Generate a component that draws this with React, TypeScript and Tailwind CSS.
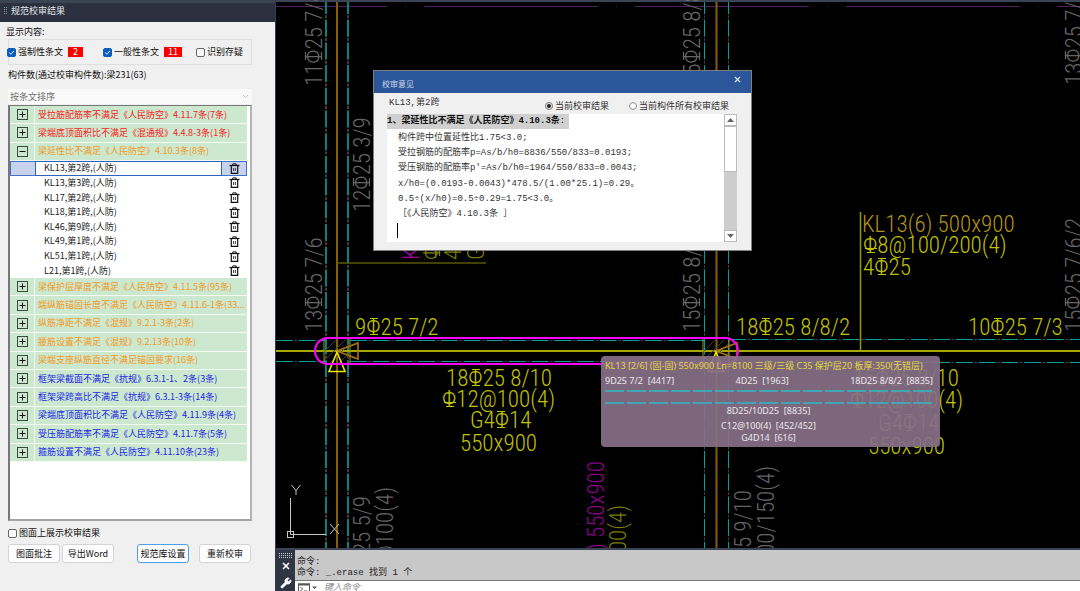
import React from 'react';
import { ChevronDown, Wrench, X } from 'lucide-react';

type Rule = { text: string; open?: boolean };

const strictRules: Rule[] = [
    { text: '受拉筋配筋率不满足《人民防空》4.11.7条(7条)' },
    { text: '梁端底顶面积比不满足《混通规》4.4.8-3条(1条)' },
];

const openRule: Rule = { text: '梁延性比不满足《人民防空》4.10.3条(8条)', open: true };

const members = [
    'KL13,第2跨,(人防)',
    'KL13,第3跨,(人防)',
    'KL17,第2跨,(人防)',
    'KL18,第1跨,(人防)',
    'KL46,第9跨,(人防)',
    'KL49,第1跨,(人防)',
    'KL51,第1跨,(人防)',
    'L21,第1跨,(人防)',
];

const generalRules: Rule[] = [
    { text: '梁保护层厚度不满足《人民防空》4.11.5条(95条)' },
    { text: '端纵筋锚固长度不满足《人民防空》4.11.6-1条(33...' },
    { text: '纵筋净距不满足《混规》9.2.1-3条(2条)' },
    { text: '腰筋设置不满足《混规》9.2.13条(10条)' },
    { text: '梁端支座纵筋直径不满足锚固要求(16条)' },
];

const otherRules: Rule[] = [
    { text: '框架梁截面不满足《抗规》6.3.1-1、2条(3条)' },
    { text: '框架梁跨高比不满足《抗规》6.3.1-3条(14条)' },
    { text: '梁端底顶面积比不满足《人民防空》4.11.9条(4条)' },
    { text: '受压筋配筋率不满足《人民防空》4.11.7条(5条)' },
    { text: '箍筋设置不满足《人民防空》4.11.10条(23条)' },
];

const opinionLines = [
    '构件跨中位置延性比1.75<3.0;',
    '受拉钢筋的配筋率p=As/b/h0=8836/550/833=0.0193;',
    "受压钢筋的配筋率p'=As/b/h0=1964/550/833=0.0043;",
    'x/h0=(0.0193-0.0043)*478.5/(1.00*25.1)=0.29。',
    '0.5÷(x/h0)=0.5÷0.29=1.75<3.0。',
    '［《人民防空》4.10.3条 ］',
];

const CheckBox = ({ label, checked }: { label: string; checked?: boolean }) => (
    <label className="flex items-center gap-0.5 whitespace-nowrap">
        <span className="relative block h-[9px] w-[9px]">
            <input
                type="checkbox"
                defaultChecked={checked}
                className="peer block h-[9px] w-[9px] appearance-none rounded-[2px] border border-[#666] bg-[#fafafa] checked:border-[#0a5fbe] checked:bg-[#0a5fbe]"
            />
            <svg viewBox="0 0 9 9" className="pointer-events-none absolute inset-0 hidden h-[9px] w-[9px] peer-checked:block">
                <path d="M2.2 4.6 L3.9 6.2 L6.9 3" fill="none" stroke="#fff" strokeWidth="1" />
            </svg>
        </span>
        {label}
    </label>
);

const ToggleIcon = ({ open }: { open?: boolean }) => (
    <svg viewBox="0 0 11 11" className="h-[11px] w-[11px]">
        <rect x="0.5" y="0.5" width="10" height="10" fill="none" stroke="#3c4a3e" />
        <path d={open ? 'M2.5 5.5H8.5' : 'M2.5 5.5H8.5M5.5 2.5V8.5'} stroke="#111" />
    </svg>
);

const TrashIcon = () => (
    <svg viewBox="0 0 11 11" className="h-[11px] w-[11px]" fill="none" stroke="#111">
        <path d="M0.5 2.5H10.5" strokeWidth="1.2" />
        <path d="M3.8 2.2V0.9H7.2V2.2" />
        <path d="M2.3 3V10.3H8.7V3" strokeWidth="1.2" />
        <path d="M4.6 5V8M6.4 5V8" strokeWidth="0.8" />
    </svg>
);

const RuleRow = ({ rule, color }: { rule: Rule; color: string }) => (
    <li className="flex border-b border-[#f2faf3] bg-[#cce8cf]">
        <button
            type="button"
            aria-label={rule.open ? '收起' : '展开'}
            className="flex w-[25px] items-center justify-center border-r border-[#f2faf3]"
        >
            <ToggleIcon open={rule.open} />
        </button>
        <span className={`flex min-w-0 flex-1 items-center overflow-hidden whitespace-nowrap pl-[3px] ${color}`}>{rule.text}</span>
    </li>
);

const MemberRow = ({ name, selected }: { name: string; selected?: boolean }) => (
    <li className={`flex ${selected ? 'bg-[#c7d3ee] ring-1 ring-inset ring-[#4472c4]' : 'bg-white'}`}>
        <span className="w-[25px]" />
        <span
            className={`flex flex-1 items-center whitespace-nowrap pl-2 text-[#222] ${selected ? 'border border-[#2f62bd] bg-white' : 'border border-transparent'}`}
        >
            {name}
        </span>
        <button type="button" aria-label="删除" className="flex w-[25px] items-center justify-center">
            <TrashIcon />
        </button>
    </li>
);

const PanelButton = ({ children, active }: { children: React.ReactNode; active?: boolean }) => (
    <button
        type="button"
        className={`h-[19px] w-[52px] whitespace-nowrap rounded-[3px] border bg-[#fdfdfd] ${active ? 'border-[#4a9fe6]' : 'border-[#d4d4d4]'}`}
    >
        {children}
    </button>
);

const ReviewPanel = () => (
    <aside className="flex w-[276px] shrink-0 flex-col border-r border-[#343b4b] bg-[#f0f0f0] text-[9px] leading-[12px] text-[#111]">
        <header className="flex h-[22px] items-center gap-[3px] border-t-3 border-[#3b4454] bg-[#2c313f] pb-1 pl-1 text-[#e4e6ea]">
            <svg viewBox="0 0 4 8" className="h-2 w-1" stroke="#8d94a3" strokeDasharray="1 1">
                <path d="M0.5 0V8M2.5 0V8" />
            </svg>
            <h1>规范校审结果</h1>
        </header>
        <div className="flex flex-1 flex-col pr-[23px] pl-2">
            <p className="-ml-0.5 mt-1">显示内容:</p>
            <div className="mt-px flex h-[26px] items-center border border-[#dedede]">
                <div className="-ml-0.5 flex items-center gap-[5px]">
                    <CheckBox label="强制性条文" checked />
                    <span className="w-[15px] bg-[#fe0000] text-center leading-[10px] text-white">2</span>
                </div>
                <div className="ml-5 flex items-center gap-[5px]">
                    <CheckBox label="一般性条文" checked />
                    <span className="w-[18px] bg-[#fe0000] text-center leading-[10px] text-white">11</span>
                </div>
                <div className="ml-[14px]">
                    <CheckBox label="识别存疑" />
                </div>
            </div>
            <p className="mt-1">构件数(通过校审构件数):梁231(63)</p>
            <div className="relative mt-2">
                <select aria-label="排序" className="block h-[15px] w-full appearance-none bg-[#f9f9f9] pl-0.5 text-[#707070]">
                    <option>按条文排序</option>
                </select>
                <ChevronDown className="pointer-events-none absolute top-[3px] right-[2px] h-[9px] w-[9px] text-[#aaa]" strokeWidth={2} />
            </div>
            <div className="mt-px flex-1 border-t border-r-2 border-b-2 border-l-2 border-t-[#777] border-r-[#b4b4b4] border-b-[#a4a4a4] border-l-[#777] bg-white pr-[3px]">
                <ul className="grid h-[55px] auto-rows-fr">
                    {strictRules.map(r => <RuleRow key={r.text} rule={r} color="text-[#f82020]" />)}
                    <RuleRow rule={openRule} color="text-[#f39a26]" />
                </ul>
                <ul className="grid h-[117px] auto-rows-fr">
                    {members.map((m, i) => <MemberRow key={m} name={m} selected={i === 0} />)}
                </ul>
                <ul className="grid h-[184px] auto-rows-fr">
                    {generalRules.map(r => <RuleRow key={r.text} rule={r} color="text-[#f39a26]" />)}
                    {otherRules.map(r => <RuleRow key={r.text} rule={r} color="text-[#1a26e8]" />)}
                </ul>
            </div>
            <div className="mt-[6px]">
                <CheckBox label="图面上展示校审结果" />
            </div>
            <div className="mt-[5px] mb-7 flex justify-between pr-px">
                <div className="flex gap-0.5">
                    <PanelButton>图面批注</PanelButton>
                    <PanelButton>导出Word</PanelButton>
                </div>
                <div className="flex gap-[10px]">
                    <PanelButton active>规范库设置</PanelButton>
                    <PanelButton>重新校审</PanelButton>
                </div>
            </div>
        </div>
    </aside>
);

const yellow = '#c2c200';
const grey = '#666666';

type Note = { x: number; y: number; text: string; fill?: string; up?: boolean; end?: boolean };

const notes: Note[] = [
    { x: 79, y: 335, text: '9Φ25 7/2' },
    { x: 170, y: 386, text: '18Φ25 8/10' },
    { x: 166, y: 407, text: 'Φ12@100(4)' },
    { x: 194, y: 428, text: 'G4Φ14' },
    { x: 184, y: 451, text: '550x900' },
    { x: 586, y: 232, text: 'KL13(6) 500x900', fill: '#b39416' },
    { x: 587, y: 253, text: 'Φ8@100/200(4)' },
    { x: 587, y: 275, text: '4Φ25' },
    { x: 460, y: 335, text: '18Φ25 8/8/2' },
    { x: 692, y: 335, text: '10Φ25 7/3' },
    { x: 577, y: 386, text: '16Φ25 8/10' },
    { x: 574, y: 408, text: 'Φ12@100(4)' },
    { x: 602, y: 431, text: 'G4Φ14' },
    { x: 592, y: 454, text: '550x900' },
    { x: 46, y: 86, text: '11Φ25 7/4', fill: grey, up: true },
    { x: 94, y: 212, text: '12Φ25 3/9', fill: grey, up: true },
    { x: 46, y: 332, text: '13Φ25 7/6', fill: grey, up: true },
    { x: 424, y: 86, text: '15Φ25 8/8/2', fill: grey, up: true },
    { x: 424, y: 332, text: '15Φ25 8/8/2', fill: grey, up: true },
    { x: 806, y: 85, text: '13Φ25 7/6', fill: grey, up: true },
    { x: 806, y: 332, text: '15Φ25 7/6/2', fill: grey, up: true },
    { x: 94, y: 496, text: '12Φ25 5/9', fill: grey, up: true, end: true },
    { x: 117, y: 487, text: 'Φ8@100(4)', fill: grey, up: true, end: true },
    { x: 475, y: 490, text: '15Φ25 9/10', fill: grey, up: true, end: true },
    { x: 498, y: 466, text: 'Φ8@100/150(4)', fill: grey, up: true, end: true },
    { x: 328, y: 461, text: 'KL9(6) 550x900', fill: '#8a008a', up: true, end: true },
    { x: 350, y: 505, text: 'Φ8@100(4)', fill: '#7c7c00', up: true, end: true },
    { x: 143, y: 260, text: 'KL14', fill: '#a000a0', up: true },
    { x: 164, y: 260, text: 'Φ8', fill: '#7c7c00', up: true },
    { x: 185, y: 260, text: '4Φ25', fill: '#7c7c00', up: true },
    { x: 208, y: 260, text: 'G4Φ14', fill: '#7c7c00', up: true },
];

// grade marks of the rebar sign: main bars carry one above and below, stirrups only below
const BarGrade = ({ note }: { note: Note }) => {
    const at = note.text.indexOf('Φ');
    if (at < 0 || note.end) return null;
    const cx = at * 11 + (note.text[0] === 'G' ? 9 : 8);
    return (
        <path
            d={at > 0 ? `M${cx - 4} -16.500h8M${cx - 4} -0.500h8` : `M${cx - 4} -0.500h8M${cx - 6} -4.500h12`}
            stroke={note.fill ?? yellow}
            strokeWidth="1.2"
        />
    );
};

const DashedBeam = ({ d, width, stroke = '#0a9c9c', offset = 0 }: { d: string; width: number; stroke?: string; offset?: number }) => (
    <g strokeWidth={width} fill="none">
        <path d={d} stroke="#4a3a3a" strokeDasharray="3 19.7" strokeDashoffset={-18.3 + offset} />
        <path d={d} stroke={stroke} strokeDasharray="17 5.7" strokeDashoffset={offset} />
    </g>
);

const ColumnJoint = ({ x }: { x: number }) => (
    <g fill="none">
        <path
            d={`M${x - 13} 352l12-12M${x - 13} 361l21-21M${x - 7} 363l20-20M${x + 2} 363l11-11`}
            stroke="#3a3a3a"
        />
        <path d={`M${x - 13} 339V363M${x + 13} 339V363`} stroke="#9a9a10" />
        <path d={`M${x} 351L${x + 21} 343V359Z`} stroke="#a87410" strokeWidth="1.6" />
        <path d={`M${x} 352L${x - 8} 371.500H${x + 8}Z`} stroke="#e8e800" strokeWidth="1.6" />
    </g>
);

const Drawing = () => (
    <svg className="block h-full w-full">
        <rect width="100%" height="2" fill="#3b4454" />
        <path d="M0 6.500H2000" stroke="#522060" strokeDasharray="174 18 1 18" strokeDashoffset="63" />
        <DashedBeam d="M50 2V600" width={2} stroke="#0a8080" offset={5} />
        <DashedBeam d="M72 2V600" width={2} stroke="#0a8080" offset={5} />
        <DashedBeam d="M428.500 2V600" width={1} offset={5} />
        <DashedBeam d="M452.500 2V600" width={1} offset={5} />
        <path d="M61 2V600M440.500 2V600" stroke="#875f00" strokeWidth="2" />
        <DashedBeam d="M0 340.500H50M74 340.500H428" width={1} />
        <DashedBeam d="M0 361.500H50M74 361.500H428" width={1} />
        <DashedBeam d="M453 339.500H2000" width={1} />
        <DashedBeam d="M453 362.500H2000" width={1} />
        <path d="M0 351H2000" stroke="#a8a800" strokeWidth="2" />
        <path d="M61 263H210" stroke="#585800" strokeWidth="1.5" />
        <path d="M584.500 212V351" stroke="#9a9a00" strokeWidth="1.5" />
        <ColumnJoint x={61} />
        <ColumnJoint x={440} />
        <rect x="39" y="338" width="423" height="26" rx="13" fill="none" stroke="#ff00ff" strokeWidth="2" />
        <g className="font-['Roboto_Condensed','Liberation_Sans_Narrow',sans-serif] text-[23px] font-light">
            {notes.map(n => (
                <g key={`${n.x}-${n.y}`} transform={`translate(${n.x} ${n.y})${n.up ? ' rotate(-90)' : ''}`}>
                    <text textAnchor={n.end ? 'end' : 'start'} fill={n.fill ?? yellow}>{n.text}</text>
                    <BarGrade note={n} />
                </g>
            ))}
        </g>
        <g fill="none" stroke="#c8c8c8">
            <path d="M14.500 498V534.500H50" />
            <rect x="11.500" y="531.500" width="6" height="6" />
            <path d="M15.500 485L20 490.500L24.500 485M20 490.500V495M54 524L63 534M63 524L54 534" />
        </g>
    </svg>
);

const ScrollArrow = ({ label, d }: { label: string; d: string }) => (
    <button type="button" aria-label={label} className="flex h-3 items-center justify-center border border-[#bbb] bg-white">
        <svg viewBox="0 0 7 4" className="h-1 w-[7px]"><path d={d} fill="#666" /></svg>
    </button>
);

const OpinionDialog = () => (
    <section
        role="dialog"
        aria-label="校审意见"
        className="absolute top-[70px] left-[97px] w-[379px] border border-[#7f7f7f] bg-[#f0f0f0] font-['Liberation_Mono','Noto_Sans_CJK_SC',monospace] text-[9px] leading-[12px] text-[#333]"
    >
        <header className="flex h-[22px] justify-between bg-[#2b579a] pl-2 text-[8px] text-[#c9d5e8]">
            <h2 className="self-end pb-0.5">校审意见</h2>
            <button type="button" aria-label="关闭" className="flex h-4 w-[27px] items-center justify-center">
                <X className="h-[9px] w-[9px] text-[#e6ecf5]" strokeWidth={3} />
            </button>
        </header>
        <div className="flex h-[21px] justify-between pr-[22px] pl-[15px]">
            <span className="mt-1">KL13,第2跨</span>
            <div className="flex items-end gap-5 pb-0.5 font-['Noto_Sans_CJK_SC',sans-serif]">
                {['当前校审结果', '当前构件所有校审结果'].map((label, i) => (
                    <label key={label} className="flex items-center gap-0.5">
                        <input
                            type="radio"
                            name="scope"
                            defaultChecked={i === 0}
                            className="h-2 w-2 appearance-none rounded-full border border-[#999] bg-white bg-clip-content p-px checked:border-[#777] checked:bg-[#222]"
                        />
                        {label}
                    </label>
                ))}
            </div>
        </div>
        <div className="mr-[14px] mb-2 ml-[13px] flex h-[128px] bg-white">
            <div className="flex flex-1 flex-col items-start justify-between whitespace-pre pb-1">
                <p className="bg-[#d0d0d0] pr-1 leading-[15px] text-[#111]">
                    <b>1、梁延性比不满足《人民防空》4.10.3条</b>:
                </p>
                {opinionLines.map(line => <p key={line} className="pl-[11px]">{line}</p>)}
                <span className="ml-[10px] h-[15px] w-px bg-black" />
            </div>
            <div className="flex w-[13px] flex-col bg-[#cdcdcd]">
                <ScrollArrow label="向上" d="M0 4L3.500 0L7 4Z" />
                <div className="h-[46px] border border-[#bbb] bg-white" />
                <div className="flex-1" />
                <ScrollArrow label="向下" d="M0 0L3.500 4L7 0Z" />
            </div>
        </div>
    </section>
);

const BeamTooltip = () => (
    <div
        role="tooltip"
        className="absolute top-[356px] left-[325px] w-[339px] rounded-[4px] bg-[#866f86]/93 px-1 pt-1 pb-[3px] font-['Noto_Sans','Noto_Sans_CJK_SC',sans-serif] text-[9px] leading-[12px] whitespace-pre text-[#ece8ec]"
    >
        <p className="text-[#e2d63c]">KL13 [2/6] (固-固) 550x900 Ln=8100 三级/三级 C35 保护层20 板厚:350(无错层)</p>
        <div className="mt-[3px] flex justify-between pr-[3px]">
            <span>9D25 7/2  [4417]</span>
            <span>4D25  [1963]</span>
            <span>18D25 8/8/2  [8835]</span>
        </div>
        <svg className="mt-[2px] block h-[16px] w-full" stroke="#2fbac6" strokeDasharray="19 3" strokeWidth="1.5">
            <line x1="0" y1="2" x2="99%" y2="2" />
            <line x1="0" y1="14" x2="99%" y2="14" />
        </svg>
        <div className="pr-1 text-center">
            <p>8D25/10D25  [8835]</p>
            <p className="mt-[3px]">C12@100(4)  [452/452]</p>
            <p>G4D14  [616]</p>
        </div>
    </div>
);

const CommandBar = () => (
    <footer className="flex h-[43px] shrink-0 border-t-2 border-[#3b4454] bg-[#2f3543] font-['Liberation_Mono','Noto_Sans_CJK_SC',monospace] text-[9px] leading-[11px]">
        <div className="flex w-[19px] flex-col items-center pt-[3px] text-white">
            <svg viewBox="0 0 13 5" className="h-[5px] w-[13px]" stroke="#c8ccd4" strokeDasharray="1 1">
                <path d="M0 0.500H13M0 2.500H13M0 4.500H13" />
            </svg>
            <button type="button" aria-label="关闭" className="mt-[3px]"><X className="h-[10px] w-[10px]" strokeWidth={4} /></button>
            <button type="button" aria-label="设置" className="mt-[6px]"><Wrench className="h-[12px] w-[12px] fill-white" strokeWidth={2} /></button>
        </div>
        <div className="flex flex-1 flex-col overflow-hidden bg-[#c8c8c8] text-[#222]">
            <div className="h-[30px] shrink-0 pt-[7px] pl-0.5 whitespace-pre">
                <p>命令:</p>
                <p>命令: _.erase 找到 1 个</p>
            </div>
            <label className="flex flex-1 items-start gap-0.5 border-t border-[#777] bg-white pt-0.5 pl-[3px]">
                <svg viewBox="0 0 20 9" className="h-[9px] w-5" fill="none" stroke="#555">
                    <rect x="0.500" y="1" width="11" height="9" />
                    <path d="M0 1.500H12" strokeWidth="2" />
                    <path d="M2.500 4L4.500 6L2.500 8M6 8H9" />
                    <path d="M14 3.500H19L16.500 6Z" fill="#555" stroke="none" />
                </svg>
                <input aria-label="键入命令" placeholder="键入命令" className="h-[11px] flex-1 pl-1 italic placeholder:text-[#888]" />
            </label>
        </div>
    </footer>
);

export default function App() {
    return (
        <div className="flex h-screen overflow-hidden bg-black font-['Noto_Sans_CJK_SC',sans-serif]">
            <ReviewPanel />
            <main className="flex min-w-0 flex-1 flex-col">
                <div className="relative min-h-0 flex-1 overflow-hidden">
                    <Drawing />
                    <OpinionDialog />
                    <BeamTooltip />
                </div>
                <CommandBar />
            </main>
        </div>
    );
}
